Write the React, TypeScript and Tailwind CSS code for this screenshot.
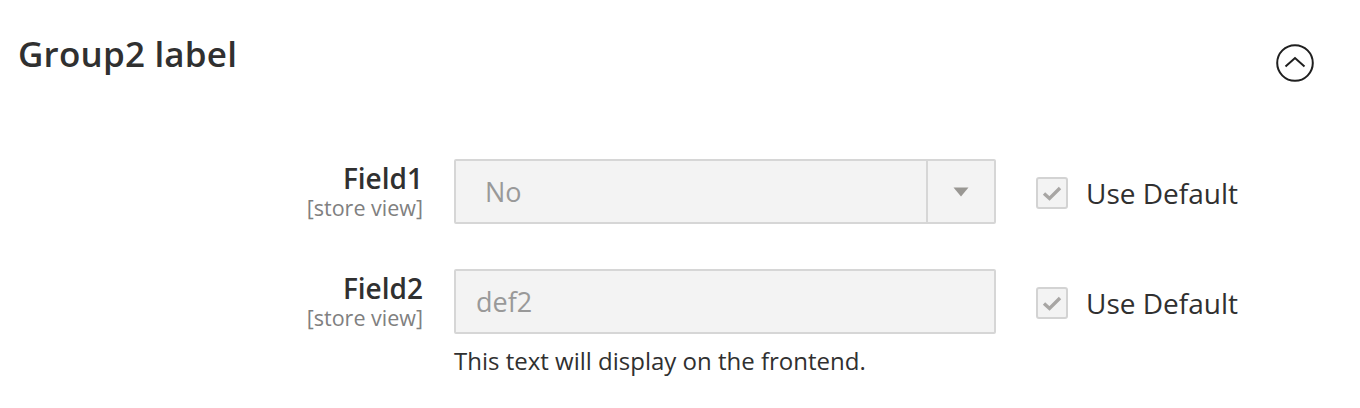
import React from "react";

function Check() {
  return (
    <div className="w-[32px] h-[32px] rounded-[3px] border-2 border-[#d3d3d3] bg-[#f3f3f3] flex items-center justify-center shrink-0">
      <svg width="22" height="18" viewBox="0 0 22 18">
        <path d="M3 9.5 L8.5 14.5 L19 4" fill="none" stroke="#a8a6a4" strokeWidth="3.4" />
      </svg>
    </div>
  );
}

function UseDefault() {
  return (
    <div className="flex items-center gap-[18px] h-[65px] pt-[3px]">
      <Check />
      <span className="text-[28px] text-[#303030] leading-none">Use Default</span>
    </div>
  );
}

function Label({ name }: { name: string }) {
  return (
    <div className="w-[423px] flex flex-col items-end pt-[3px] shrink-0">
      <span className="text-[28px] font-semibold text-[#303030] leading-[32px]">{name}</span>
      <span className="text-[21.5px] text-[#808080] leading-[27px]">[store view]</span>
    </div>
  );
}

export default function App() {
  return (
    <div className="w-[1360px] h-[408px] bg-white" style={{ fontFamily: '"Open Sans", sans-serif' }}>
      <div className="flex items-start justify-between pl-[18px] pr-[46px] pt-[34px]">
        <h2 className="text-[35px] font-semibold text-[#303030] leading-[40px] tracking-[0.2px]">Group2 label</h2>
        <svg width="38" height="38" viewBox="0 0 38 38" className="mt-[10px]">
          <circle cx="19" cy="19" r="17.8" fill="none" stroke="#1f1f1f" strokeWidth="2" />
          <path d="M9.5 22.5 L19 14 L28.5 22.5" fill="none" stroke="#1f1f1f" strokeWidth="2" />
        </svg>
      </div>

      <div className="flex flex-col gap-[45px] mt-[77px]">
        <div className="flex items-start">
          <Label name="Field1" />
          <div className="ml-[31px] w-[542px] h-[65px] border-2 border-[#d6d6d6] rounded-[2px] bg-[#f3f3f3] flex">
            <div className="flex-1 flex items-center pl-[29px] pt-[2px] text-[27px] text-[#999999]">No</div>
            <div className="w-[68px] border-l-2 border-[#d6d6d6] flex items-center justify-center">
              <svg width="16" height="10" viewBox="0 0 16 10">
                <path d="M0.5 0.5 L15.5 0.5 L8 9.5 Z" fill="#999793" />
              </svg>
            </div>
          </div>
          <div className="ml-[40px]">
            <UseDefault />
          </div>
        </div>

        <div className="flex items-start">
          <Label name="Field2" />
          <div className="ml-[31px] w-[542px] flex flex-col">
            <div className="h-[65px] border-2 border-[#d6d6d6] rounded-[2px] bg-[#f3f3f3] flex items-center pl-[20px] pt-[2px] text-[27px] text-[#999999]">def2</div>
            <div className="mt-[10px] text-[24px] text-[#303030] leading-[34px]">This text will display on the frontend.</div>
          </div>
          <div className="ml-[40px]">
            <UseDefault />
          </div>
        </div>
      </div>
    </div>
  );
}
